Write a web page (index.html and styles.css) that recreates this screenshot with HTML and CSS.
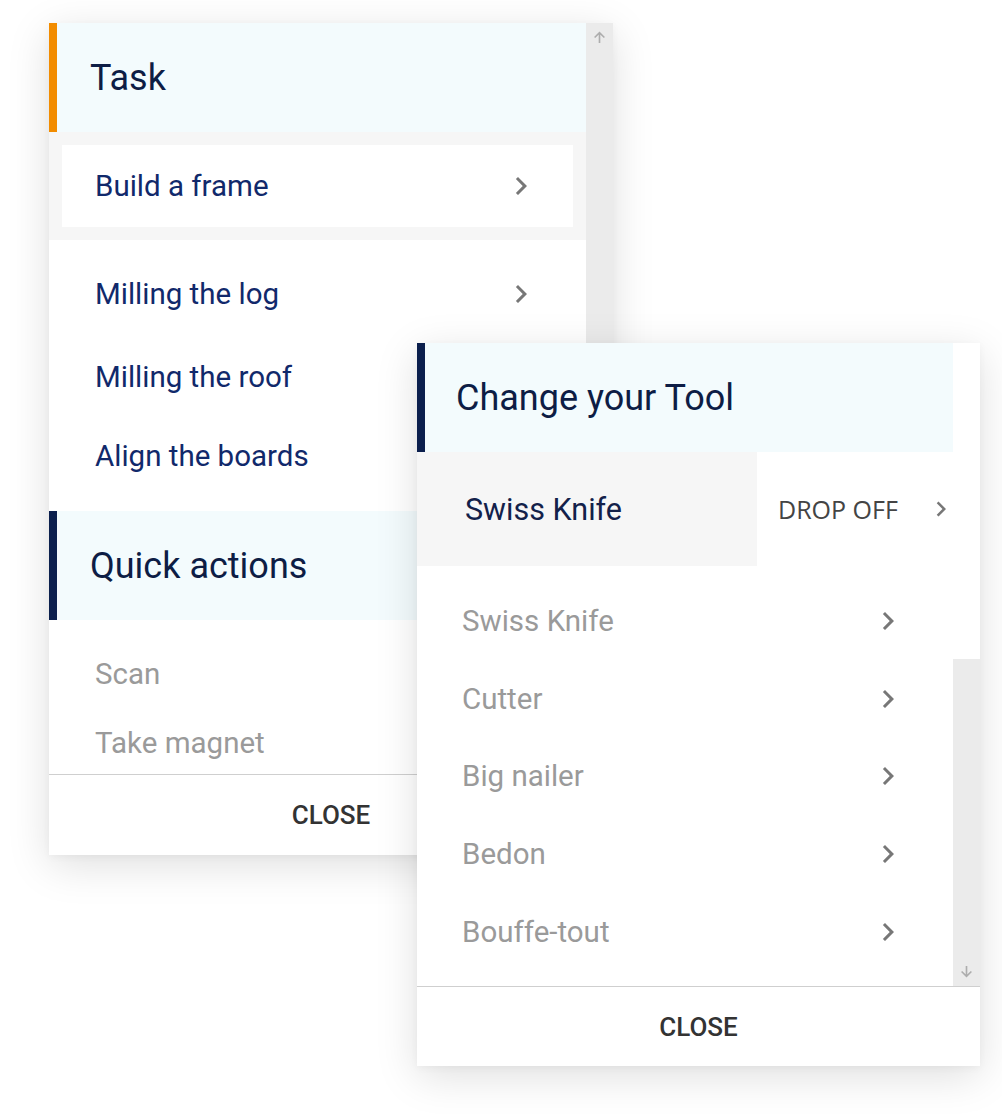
FILE: index.html
```html
<!DOCTYPE html>
<html lang="en">
<head>
<meta charset="utf-8">
<title>Panels</title>
<link rel="stylesheet" href="styles.css">
</head>
<body>
<div class="stage">
  <section class="panel panel-task">
    <div class="panel-body">
      <div class="panel-content">
        <div class="section-head head-orange"><span>Task</span></div>
        <div class="card-wrap">
          <div class="card">
            <span class="item-label">Build a frame</span>
            <svg class="chev" viewBox="0 0 24 24"><path d="M10 6L8.59 7.41 13.17 12l-4.58 4.59L10 18l6-6z"/></svg>
          </div>
        </div>
        <ul class="task-list">
          <li class="task-row"><span class="item-label">Milling the log</span><svg class="chev" viewBox="0 0 24 24"><path d="M10 6L8.59 7.41 13.17 12l-4.58 4.59L10 18l6-6z"/></svg></li>
          <li class="task-row row-roof"><span class="item-label">Milling the roof</span><svg class="chev" viewBox="0 0 24 24"><path d="M10 6L8.59 7.41 13.17 12l-4.58 4.59L10 18l6-6z"/></svg></li>
          <li class="task-row"><span class="item-label">Align the boards</span><svg class="chev" viewBox="0 0 24 24"><path d="M10 6L8.59 7.41 13.17 12l-4.58 4.59L10 18l6-6z"/></svg></li>
        </ul>
        <div class="section-head head-navy"><span>Quick actions</span></div>
        <ul class="quick-list">
          <li class="quick-row">Scan</li>
          <li class="quick-row">Take magnet</li>
        </ul>
      </div>
      <div class="scrollbar">
        <svg class="arrow-up" viewBox="0 0 12 12"><path d="M6 11V1.5M1.5 6L6 1.5 10.5 6"/></svg>
      </div>
    </div>
    <div class="panel-foot">CLOSE</div>
  </section>

  <section class="panel panel-tool">
    <div class="panel-body">
      <div class="panel-content">
        <div class="section-head head-navy tool-head"><span>Change your Tool</span></div>
        <div class="selected-row">
          <div class="selected-name">Swiss Knife</div>
          <div class="selected-action">
            <span class="drop-off">DROP OFF</span>
            <svg class="chev chev-small" viewBox="0 0 24 24"><path d="M10 6L8.59 7.41 13.17 12l-4.58 4.59L10 18l6-6z"/></svg>
          </div>
        </div>
        <ul class="tool-list">
          <li class="tool-row"><span>Swiss Knife</span><svg class="chev" viewBox="0 0 24 24"><path d="M10 6L8.59 7.41 13.17 12l-4.58 4.59L10 18l6-6z"/></svg></li>
          <li class="tool-row"><span>Cutter</span><svg class="chev" viewBox="0 0 24 24"><path d="M10 6L8.59 7.41 13.17 12l-4.58 4.59L10 18l6-6z"/></svg></li>
          <li class="tool-row"><span>Big nailer</span><svg class="chev" viewBox="0 0 24 24"><path d="M10 6L8.59 7.41 13.17 12l-4.58 4.59L10 18l6-6z"/></svg></li>
          <li class="tool-row"><span>Bedon</span><svg class="chev" viewBox="0 0 24 24"><path d="M10 6L8.59 7.41 13.17 12l-4.58 4.59L10 18l6-6z"/></svg></li>
          <li class="tool-row"><span>Bouffe-tout</span><svg class="chev" viewBox="0 0 24 24"><path d="M10 6L8.59 7.41 13.17 12l-4.58 4.59L10 18l6-6z"/></svg></li>
        </ul>
      </div>
      <div class="scroll-col">
        <div class="scroll-space"></div>
        <div class="scroll-track">
          <svg class="arrow-down" viewBox="0 0 12 12"><path d="M6 1v9.5M1.5 6L6 10.5 10.5 6"/></svg>
        </div>
      </div>
    </div>
    <div class="panel-foot">CLOSE</div>
  </section>
</div>
</body>
</html>
```
FILE: styles.css
```css
* { box-sizing: border-box; }
html, body { margin: 0; padding: 0; background: #ffffff; }
body { font-family: Roboto, "Liberation Sans", Arial, sans-serif; }
ul { list-style: none; margin: 0; padding: 0; }

.stage {
  position: relative;
  width: 1002px;
  height: 1114px;
  padding: 23px 0 0 49px;
}

.panel {
  background: #ffffff;
  display: flex;
  flex-direction: column;
  box-shadow: 0 10px 40px rgba(0, 0, 0, 0.13), 0 2px 8px rgba(0, 0, 0, 0.04);
}

.panel-task { width: 564px; height: 832px; }

.panel-tool {
  position: absolute;
  left: 417px;
  top: 343px;
  width: 563px;
  height: 723px;
}

.panel-body { display: flex; flex: 1; min-height: 0; overflow: hidden; }
.panel-content { flex: 1; min-width: 0; overflow: hidden; }

.section-head {
  height: 109px;
  background: #f3fbfd;
  display: flex;
  align-items: center;
  padding-left: 33px;
  border-left: 8px solid #0b1f4d;
  font-size: 36px;
  color: #0d1d45;
}
.head-orange { border-left-color: #f28c00; }
.tool-head { padding-left: 31px; }

.card-wrap { background: #f6f6f6; padding: 13px; height: 108px; }
.card {
  background: #ffffff;
  height: 82px;
  display: flex;
  align-items: center;
  justify-content: space-between;
  padding: 0 34px 0 33px;
}

.item-label { font-size: 29.5px; color: #11296b; }

.chev { width: 36px; height: 36px; fill: #777777; flex: none; }
.chev-small { width: 30px; height: 30px; margin-right: -3px; }

.task-list { padding: 13px 0 15px; }
.task-row {
  height: 81px;
  display: flex;
  align-items: center;
  justify-content: space-between;
  padding: 0 47px 0 46px;
}
.task-row.row-roof { padding-top: 4px; }

.quick-list { padding-top: 19px; }
.quick-row {
  height: 69px;
  display: flex;
  align-items: center;
  padding-left: 46px;
  font-size: 29.5px;
  color: #9a9a9a;
}

.scrollbar {
  width: 27px;
  flex: none;
  background: #ebebeb;
  display: flex;
  justify-content: center;
  padding-top: 8px;
}
.arrow-up, .arrow-down {
  width: 13px;
  height: 13px;
  fill: none;
  stroke: #adadad;
  stroke-width: 1.5;
}

.panel-foot {
  height: 81px;
  flex: none;
  border-top: 1px solid #cfcfcf;
  display: flex;
  align-items: center;
  justify-content: center;
  font-size: 26px;
  font-weight: 500;
  color: #333333;
}
.panel-tool .panel-foot { height: 80px; }

.selected-row { display: flex; height: 114px; }
.selected-name {
  width: 340px;
  background: #f6f6f6;
  display: flex;
  align-items: center;
  padding-left: 48px;
  font-size: 30.5px;
  color: #13214a;
}
.selected-action {
  flex: 1;
  display: flex;
  align-items: center;
  justify-content: space-between;
  padding: 0 0 0 21px;
}
.drop-off {
  font-family: "Open Sans", "Noto Sans", sans-serif;
  font-size: 25px;
  color: #444444;
}

.tool-list { padding-top: 16px; }
.tool-row {
  height: 77.75px;
  display: flex;
  align-items: center;
  justify-content: space-between;
  padding: 0 47px 0 45px;
  font-size: 29.5px;
  color: #9a9a9a;
}

.scroll-col { width: 27px; flex: none; display: flex; flex-direction: column; }
.scroll-space { height: 316px; background: #ffffff; }
.scroll-track {
  flex: 1;
  background: #ebebeb;
  display: flex;
  justify-content: center;
  align-items: flex-end;
  padding-bottom: 8px;
}
```
